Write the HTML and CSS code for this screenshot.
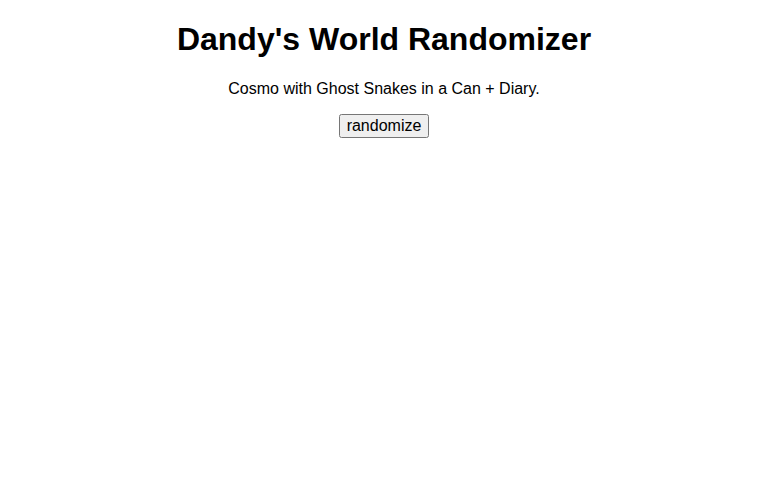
FILE: index.html
```html
<!DOCTYPE html>
<html>
<head lang="en">
    <meta charset="UTF-8">
    <title>Dandy's World Randomizer</title>
<link rel="stylesheet" href="styles.css">
</head>
<body>
<div class="main">
    <h1>Dandy's World Randomizer</h1>
    <p id="result">Cosmo with Ghost Snakes in a Can + Diary.</p>
    <button id="randomize">randomize</button>
</div>
<script>
var toons = ["Cosmo", "Boxten", "Poppy", "Shrimpo", "Vee", "Pebble", "Goob", "Astro"];
var trinkets = ["Ghost Snakes in a Can", "Diary", "Pink Bow", "Blue Bandana", "Speedometer", "Fancy Purse"];
function pick(arr){
    return arr[Math.floor(Math.random() * arr.length)];
}
document.getElementById("randomize").addEventListener("click", function(){
    var a = pick(trinkets);
    var b = pick(trinkets);
    while(b === a){
        b = pick(trinkets);
    }
    document.getElementById("result").innerHTML = pick(toons) + " with " + a + " + " + b + ".";
}, false);
</script>
</body>
</html>
```

FILE: styles.css
```css
body {
	margin: 0 8px;
	font-family: "Liberation Sans", Arial, sans-serif;
	color: #000;
	background-color: #fff;
}
.main {
	text-align: center;
}
button {
	font-family: "Liberation Sans", Arial, sans-serif;
	font-size: 16px;
}
```
